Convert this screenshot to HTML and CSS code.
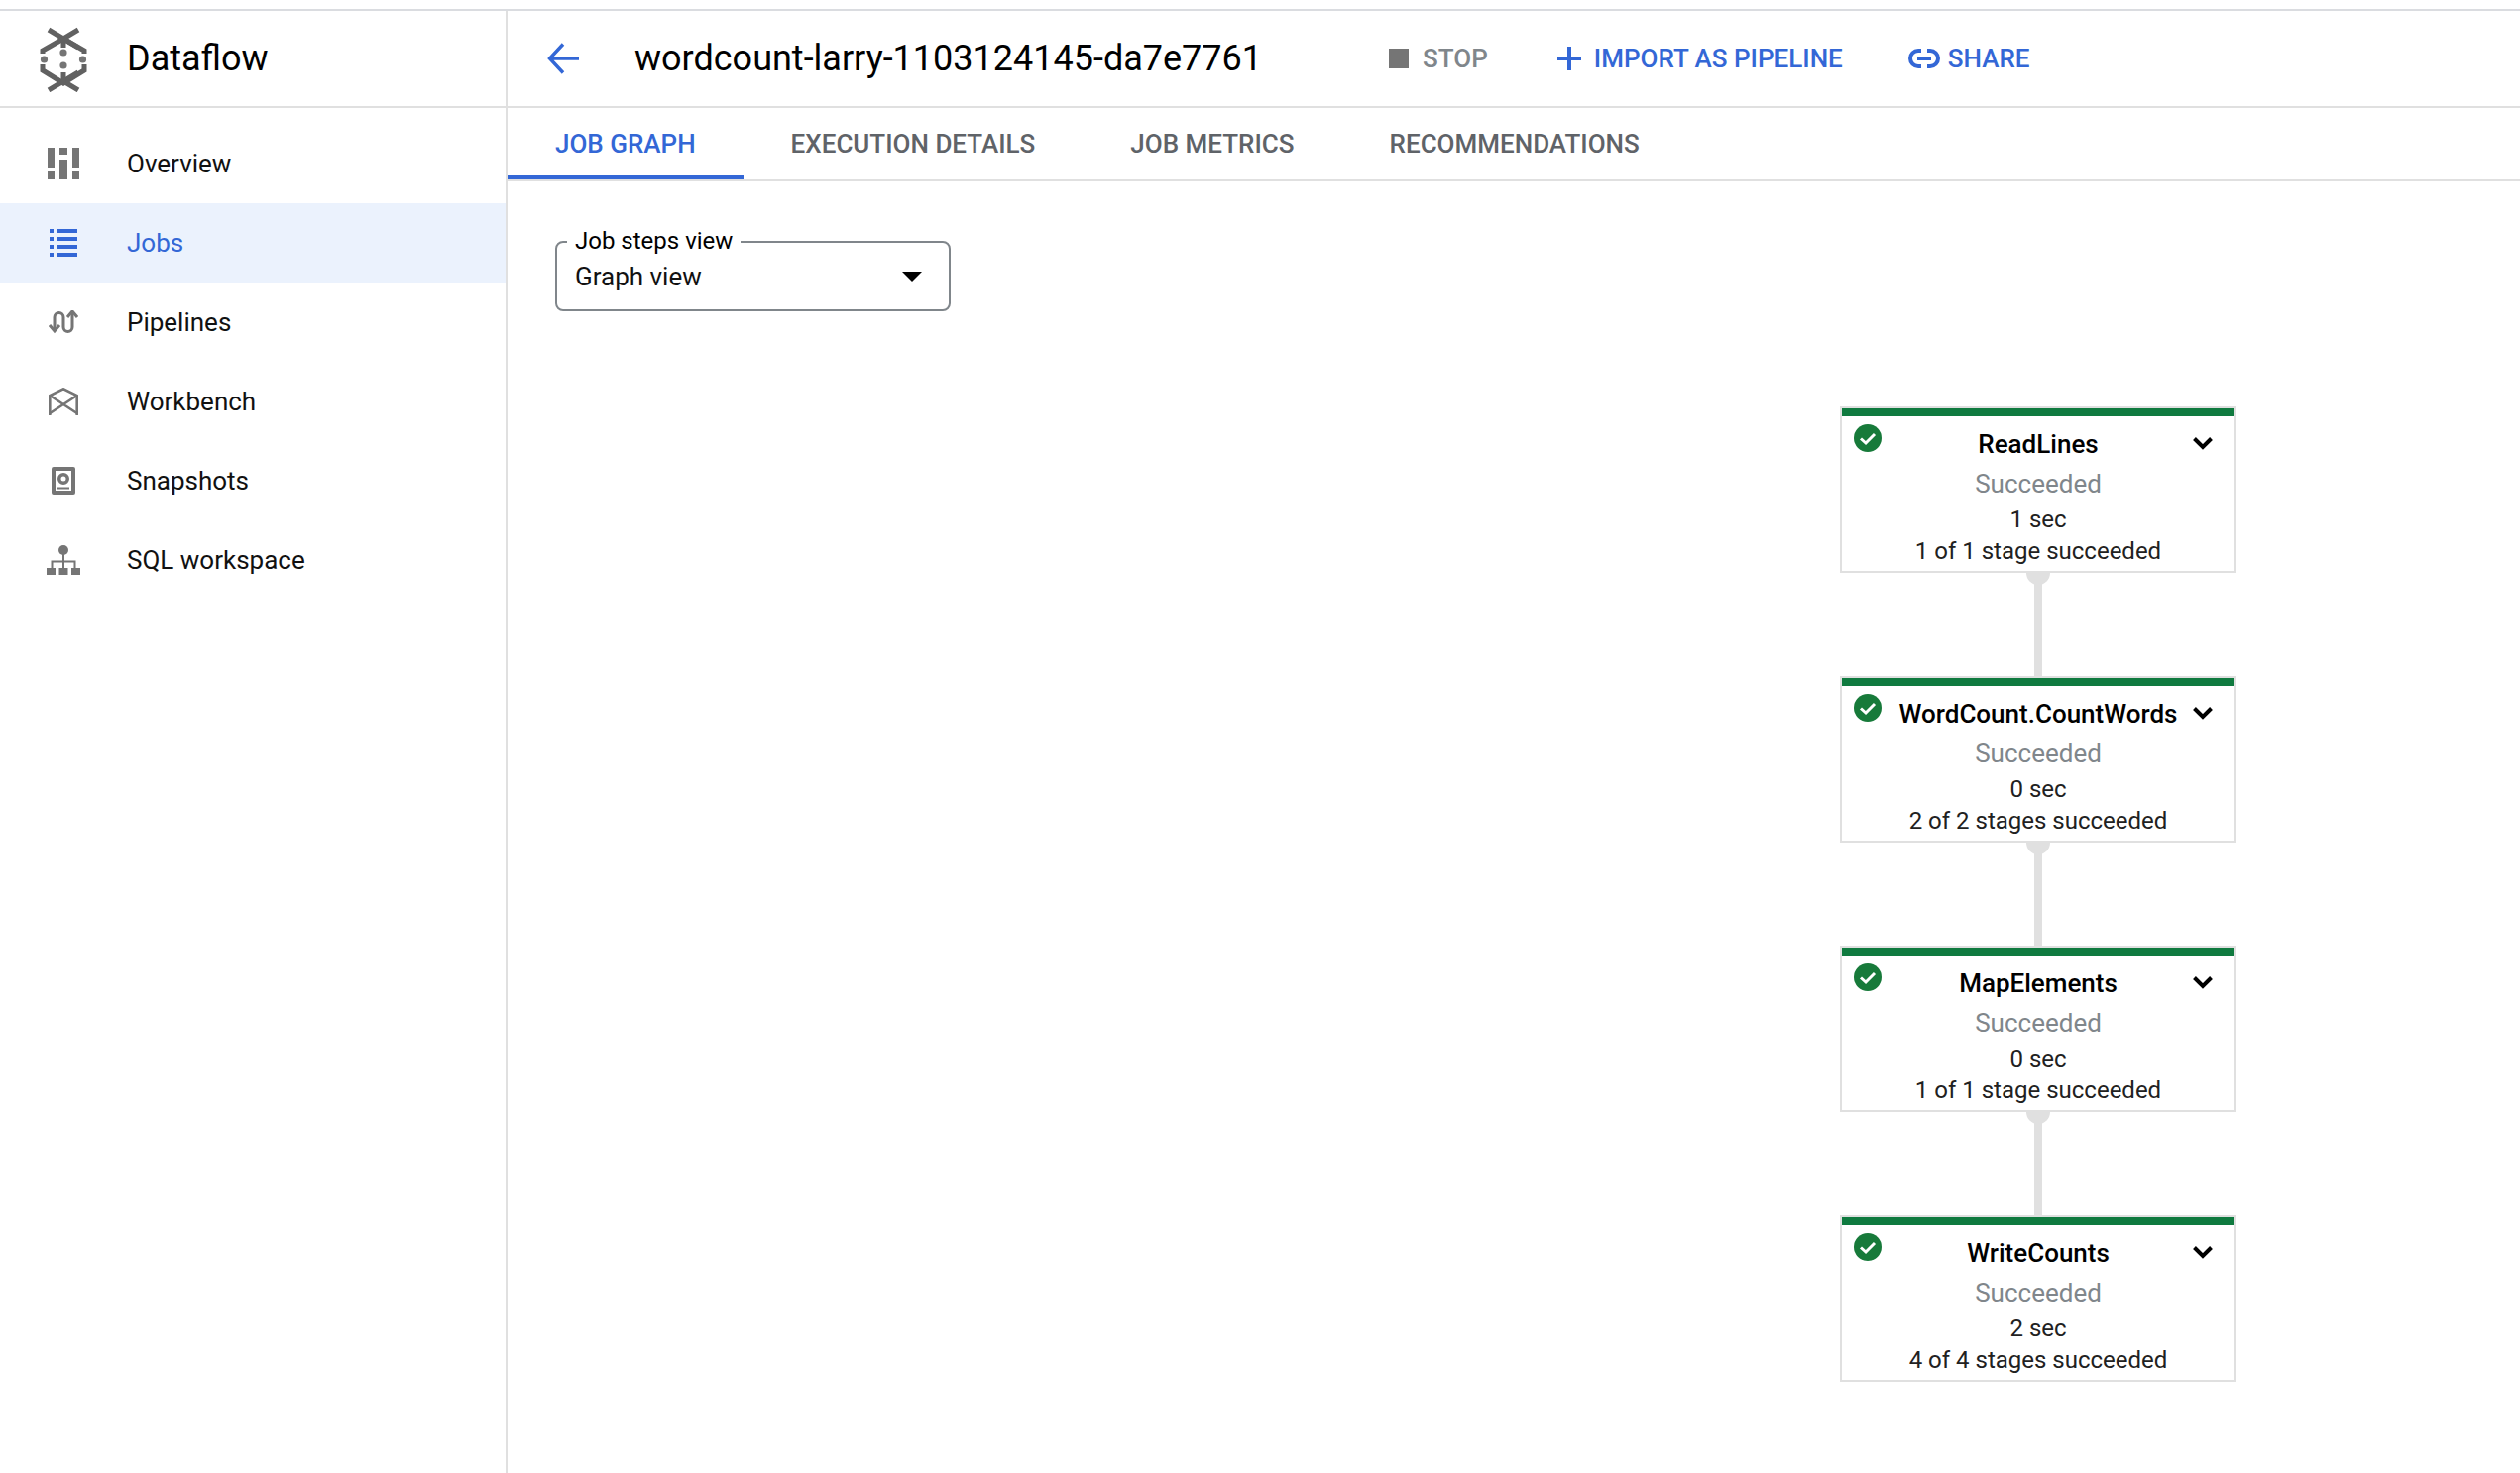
FILE: index.html
```html
<!DOCTYPE html>
<html lang="en">
<head>
<meta charset="utf-8">
<title>Dataflow</title>
<link rel="stylesheet" href="styles.css">
</head>
<body>
<div class="app">
  <aside class="sidebar">
    <div class="brand">
      <svg class="logo" viewBox="40 26 48 66" width="48" height="66">
        <g fill="none" stroke="#616161" stroke-width="5">
          <path d="M49 29 L79 47 M79 29 L64 38"/>
          <path d="M64 37 V47"/>
          <path d="M64 38 L43 50 V53 M64 38 L85 50 V53"/>
          <path d="M43 64 V70 L64 83 L85 70 V64"/>
          <path d="M49 90 L79 72 M79 90 L64 81"/>
          <path d="M64 72 V83"/>
        </g>
        <g fill="#757575">
          <circle cx="64" cy="52" r="3.6"/><circle cx="64" cy="65" r="3.6"/>
          <circle cx="44.500" cy="59" r="3.6"/><circle cx="83.500" cy="59" r="3.6"/>
        </g>
      </svg>
      <span class="brand-name">Dataflow</span>
    </div>
    <nav class="nav">
      <a class="nav-item">
        <span class="nav-icon"><svg viewBox="0 0 32 32" width="32" height="32"><path fill="#757575" d="M0 0h7v20H0zM12 0h8v7h-8zM25 0h7v20h-7zM12 12h8v20h-8zM0 24h7v8H0zM25 24h7v8h-7z"/></svg></span>
        <span>Overview</span>
      </a>
      <a class="nav-item active">
        <span class="nav-icon"><svg viewBox="0 0 28 28" width="28" height="28"><path fill="#3367d6" d="M0 0h4v4H0zM8 0h20v4H8zM0 8h4v4H0zM8 8h20v4H8zM0 16h4v4H0zM8 16h20v4H8zM0 24h4v4H0zM8 24h20v4H8z"/></svg></span>
        <span>Jobs</span>
      </a>
      <a class="nav-item">
        <span class="nav-icon"><svg viewBox="0 0 30 24" width="30" height="24"><g fill="none" stroke="#757575" stroke-width="3"><path d="M6 20V7a4.500 4.500 0 0 1 9 0v10a4.500 4.500 0 0 0 9 0V3"/><path d="M1 15l5 6 5-6M19 7l5-6 5 6"/></g></svg></span>
        <span>Pipelines</span>
      </a>
      <a class="nav-item">
        <span class="nav-icon"><svg viewBox="0 0 30 28" width="30" height="28"><g fill="none" stroke="#757575" stroke-width="2.600"><path d="M1.300 28V8L15 1.300 28.700 8v20"/><path d="M1.300 8L28.700 26M28.700 8L1.300 26"/></g></svg></span>
        <span>Workbench</span>
      </a>
      <a class="nav-item">
        <span class="nav-icon"><svg viewBox="0 0 24 28" width="24" height="28"><path fill="#757575" fill-rule="evenodd" d="M2 0h20a2 2 0 0 1 2 2v24a2 2 0 0 1-2 2H2a2 2 0 0 1-2-2V2a2 2 0 0 1 2-2zm2 4v20h16V4z"/><path fill="#757575" fill-rule="evenodd" d="M12 6a6 6 0 1 1 0 12 6 6 0 0 1 0-12zm0 3.500a2.500 2.500 0 1 0 0 5 2.500 2.500 0 0 0 0-5zM6 20.500h12v2H6z"/></svg></span>
        <span>Snapshots</span>
      </a>
      <a class="nav-item">
        <span class="nav-icon"><svg viewBox="0 0 34 30" width="34" height="30"><g fill="#757575"><circle cx="17" cy="5" r="5"/><path d="M16 8h2v9h-2zM4.500 15.500h25v2h-25zM4.500 16h2v8h-2zM16 16h2v8h-2zM27.500 16h2v8h-2zM0 23h9v7H0zM12.500 23h9v7h-9zM25 23h9v7h-9z"/></g></svg></span>
        <span>SQL workspace</span>
      </a>
    </nav>
  </aside>
  <main class="main">
    <header class="job-bar">
      <svg class="back" viewBox="0 0 32 32" width="32" height="32"><path fill="none" stroke="#3367d6" stroke-width="3.400" d="M32 16H3M16 1.500 2.500 16 16 30.500"/></svg>
      <h1 class="job-title">wordcount-larry-1103124145-da7e7761</h1>
      <div class="actions">
        <button class="action stop"><span class="stop-icon"></span>STOP</button>
        <button class="action primary import"><svg viewBox="0 0 24 24" width="24" height="24"><path fill="#3367d6" d="M10 0h4v10h10v4H14v10h-4V14H0v-4h10z"/></svg>IMPORT AS PIPELINE</button>
        <button class="action primary share"><svg viewBox="0 0 32 20" width="32" height="20"><path fill="none" stroke="#3367d6" stroke-width="4" d="M13 2H10a8 8 0 0 0 0 16h3M19 2h3a8 8 0 0 1 0 16h-3"/><path fill="#3367d6" d="M9 8h14v4H9z"/></svg>SHARE</button>
      </div>
    </header>
    <div class="tabs">
      <div class="tab active">JOB GRAPH</div>
      <div class="tab">EXECUTION DETAILS</div>
      <div class="tab">JOB METRICS</div>
      <div class="tab">RECOMMENDATIONS</div>
    </div>
    <div class="content">
      <div class="select">
        <span class="select-label">Job steps view</span>
        <span>Graph view</span>
        <span class="caret"></span>
      </div>
      <div class="graph">
        <section class="card">
          <div class="card-head">
            <svg class="check" viewBox="0 0 28 28" width="28" height="28"><circle cx="14" cy="14" r="14" fill="#177a3a"/><path fill="none" stroke="#fff" stroke-width="3" d="M7 14.500l5 4.500 9-9"/></svg>
            <div class="card-name">ReadLines</div>
            <svg class="chevron" viewBox="0 0 20 13" width="20" height="13"><path fill="none" stroke="#000" stroke-width="4" d="M1.500 1.500 10 10l8.500-8.500"/></svg>
          </div>
          <div class="card-state">Succeeded</div>
          <div class="card-meta">1 sec</div>
          <div class="card-meta">1 of 1 stage succeeded</div>
        </section>
        <div class="link"></div>
        <section class="card">
          <div class="card-head">
            <svg class="check" viewBox="0 0 28 28" width="28" height="28"><circle cx="14" cy="14" r="14" fill="#177a3a"/><path fill="none" stroke="#fff" stroke-width="3" d="M7 14.500l5 4.500 9-9"/></svg>
            <div class="card-name">WordCount.CountWords</div>
            <svg class="chevron" viewBox="0 0 20 13" width="20" height="13"><path fill="none" stroke="#000" stroke-width="4" d="M1.500 1.500 10 10l8.500-8.500"/></svg>
          </div>
          <div class="card-state">Succeeded</div>
          <div class="card-meta">0 sec</div>
          <div class="card-meta">2 of 2 stages succeeded</div>
        </section>
        <div class="link"></div>
        <section class="card">
          <div class="card-head">
            <svg class="check" viewBox="0 0 28 28" width="28" height="28"><circle cx="14" cy="14" r="14" fill="#177a3a"/><path fill="none" stroke="#fff" stroke-width="3" d="M7 14.500l5 4.500 9-9"/></svg>
            <div class="card-name">MapElements</div>
            <svg class="chevron" viewBox="0 0 20 13" width="20" height="13"><path fill="none" stroke="#000" stroke-width="4" d="M1.500 1.500 10 10l8.500-8.500"/></svg>
          </div>
          <div class="card-state">Succeeded</div>
          <div class="card-meta">0 sec</div>
          <div class="card-meta">1 of 1 stage succeeded</div>
        </section>
        <div class="link"></div>
        <section class="card">
          <div class="card-head">
            <svg class="check" viewBox="0 0 28 28" width="28" height="28"><circle cx="14" cy="14" r="14" fill="#177a3a"/><path fill="none" stroke="#fff" stroke-width="3" d="M7 14.500l5 4.500 9-9"/></svg>
            <div class="card-name">WriteCounts</div>
            <svg class="chevron" viewBox="0 0 20 13" width="20" height="13"><path fill="none" stroke="#000" stroke-width="4" d="M1.500 1.500 10 10l8.500-8.500"/></svg>
          </div>
          <div class="card-state">Succeeded</div>
          <div class="card-meta">2 sec</div>
          <div class="card-meta">4 of 4 stages succeeded</div>
        </section>
      </div>
    </div>
  </main>
</div>
</body>
</html>
```

FILE: styles.css
```css
* { box-sizing: border-box; }
html, body { margin: 0; height: 100%; overflow: hidden; background: #fff; }
body { font-family: Roboto, "Liberation Sans", sans-serif; color: #000; padding-top: 9px; }

.app {
  display: flex;
  height: 1477px;
  border-top: 2px solid #dadce0;
}

/* sidebar */
.sidebar {
  width: 512px;
  flex: none;
  border-right: 2px solid #e0e0e0;
}
.brand {
  height: 98px;
  display: flex;
  align-items: center;
  padding-left: 40px;
  border-bottom: 2px solid #e0e0e0;
}
.logo { flex: none; margin-right: 40px; margin-top: 2px; }
.brand-name { font-size: 36px; color: #000; }
.nav { padding-top: 16px; }
.nav-item {
  display: flex;
  align-items: center;
  height: 80px;
  font-size: 26px;
  color: #111;
}
.nav-item.active { background: #ebf2fd; color: #3367d6; }
.nav-icon {
  width: 128px;
  flex: none;
  display: flex;
  justify-content: flex-start;
  padding-left: 47px;
}
.nav-item:nth-child(1) .nav-icon { padding-left: 48px; }
.nav-item:nth-child(2) .nav-icon { padding-left: 50px; }
.nav-item:nth-child(3) .nav-icon { padding-left: 49px; }
.nav-item:nth-child(4) .nav-icon { padding-left: 49px; }
.nav-item:nth-child(5) .nav-icon { padding-left: 52px; }

/* job bar */
.main { flex: 1; min-width: 0; display: flex; flex-direction: column; }
.job-bar {
  height: 98px;
  flex: none;
  display: flex;
  align-items: center;
  padding-left: 40px;
  border-bottom: 2px solid #e0e0e0;
}
.back { flex: none; margin-right: 56px; }
.job-title { margin: 0; font-size: 36px; font-weight: 400; white-space: nowrap; }
.actions { display: flex; align-items: center; margin-left: 128px; }
.action {
  display: flex;
  align-items: center;
  padding: 0;
  border: 0;
  background: none;
  font: 500 26px Roboto, "Liberation Sans", sans-serif;
  white-space: nowrap;
}
.stop { color: #80868b; gap: 14px; }
.stop-icon { width: 20px; height: 20px; background: #757575; }
.primary { color: #3367d6; }
.import { gap: 13px; margin-left: 70px; }
.share { gap: 8px; margin-left: 66px; }

/* tabs */
.tabs {
  height: 74px;
  flex: none;
  display: flex;
  border-bottom: 2px solid #e0e0e0;
}
.tab {
  display: flex;
  align-items: center;
  padding: 0 48px;
  font-size: 26px;
  font-weight: 500;
  color: #5f6368;
}
.tab.active { color: #3367d6; box-shadow: inset 0 -4px 0 #3367d6; }

/* content */
.content { flex: 1; padding: 60px 0 0 48px; }
.select {
  position: relative;
  width: 399px;
  height: 71px;
  display: flex;
  align-items: center;
  padding: 0 18px;
  border: 2px solid #80868b;
  border-radius: 8px;
  font-size: 26px;
  color: #111;
}
.select-label {
  position: absolute;
  left: 10px;
  top: -16px;
  padding: 0 8px;
  background: #fff;
  font-size: 24px;
  line-height: 28px;
  font-weight: 400;
  color: #000;
}
.caret {
  margin-left: auto;
  margin-right: 9px;
  border-left: 10px solid transparent;
  border-right: 10px solid transparent;
  border-top: 10px solid #000;
}

/* graph */
.graph { width: 400px; margin: 96px 0 0 1296px; }
.card {
  position: relative;
  z-index: 1;
  background: #fff;
  border: 2px solid #e0e0e0;
  height: 168px;
  text-align: center;
}
.card::before { content: ""; display: block; height: 8px; background: #0f7a3f; }
.card-head {
  display: grid;
  grid-template-columns: 54px 1fr 54px;
  padding-top: 8px;
  height: 48px;
}
.check { margin: 0 0 0 12px; }
.card-name { font-size: 26px; font-weight: 500; line-height: 40px; white-space: nowrap; }
.chevron { margin: 13px 0 0 12px; }
.card-state { font-size: 26px; line-height: 40px; color: #80868b; }
.card-meta { font-size: 24px; line-height: 32px; color: #212121; }
.link {
  position: relative;
  width: 8px;
  height: 104px;
  margin: 0 auto;
  background: #e0e0e0;
}
.link::before {
  content: "";
  position: absolute;
  left: -8px;
  top: -12px;
  width: 24px;
  height: 24px;
  border-radius: 50%;
  background: #e0e0e0;
}
```
